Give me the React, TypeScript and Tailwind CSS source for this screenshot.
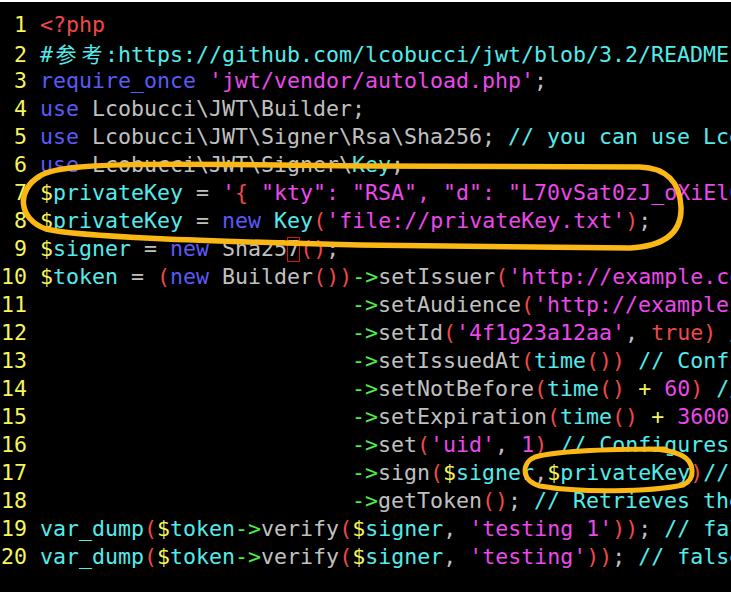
import React from "react";

type C = "y" | "r" | "c" | "b" | "g" | "m" | "n";
type Seg = [string, C];

const color: Record<C, string> = {
  y: "text-[#f5f55c]",
  r: "text-[#f04848]",
  c: "text-[#52ecec]",
  b: "text-[#5a5af8]",
  g: "text-[#c0c0c0]",
  m: "text-[#ec48ec]",
  n: "text-[#4cf04c]",
};

const IND = "                        ";

const lines: Seg[][] = [
  [["<?php", "r"]],
  [], // line 2 drawn separately (CJK)
  [["require_once", "b"], [" ", "g"], ["'jwt/vendor/autoload.php'", "m"], [";", "g"]],
  [["use", "b"], [" Lcobucci\\JWT\\Builder;", "g"]],
  [
    ["use", "b"],
    [" Lcobucci\\JWT\\Signer\\Rsa\\Sha256; ", "g"],
    ["// you can use Lcobucci\\JWT\\Signer\\Ecdsa\\Sha256 if you're using ECDSA keys", "c"],
  ],
  [["use", "b"], [" Lcobucci\\JWT\\Signer\\", "g"], ["Key", "c"], [";", "g"]],
  [
    ["$", "y"],
    ["privateKey", "c"],
    [" = ", "g"],
    ["'", "m"],
    ["{", "r"],
    [' "kty": "RSA", "d": "L70vSat0zJ_oXiEl6q8uCt1xC0", "n": "r1QM"', "m"],
  ],
  [
    ["$", "y"],
    ["privateKey", "c"],
    [" = ", "g"],
    ["new", "b"],
    [" ", "g"],
    ["Key", "c"],
    ["(", "r"],
    ["'file://privateKey.txt'", "m"],
    [")", "r"],
    [";", "g"],
  ],
  [], // line 9 drawn separately (cursor)
  [
    ["$", "y"],
    ["token", "c"],
    [" = ", "g"],
    ["(", "r"],
    ["new", "b"],
    [" Builder", "g"],
    ["())", "r"],
    ["->", "n"],
    ["setIssuer", "g"],
    ["(", "r"],
    ["'http://example.com'", "m"],
    [")", "r"],
    [" // Configures the issuer (iss claim)", "c"],
  ],
  [
    [IND, "g"],
    ["->", "n"],
    ["setAudience", "g"],
    ["(", "r"],
    ["'http://example.org'", "m"],
    [")", "r"],
    [" // Configures the audience (aud claim)", "c"],
  ],
  [
    [IND, "g"],
    ["->", "n"],
    ["setId", "g"],
    ["(", "r"],
    ["'4f1g23a12aa'", "m"],
    [", ", "g"],
    ["true", "r"],
    [")", "r"],
    [" // Configures the id (jti claim)", "c"],
  ],
  [
    [IND, "g"],
    ["->", "n"],
    ["setIssuedAt", "g"],
    ["(", "r"],
    ["time", "c"],
    ["())", "r"],
    [" // Configures the time that the token was issued", "c"],
  ],
  [
    [IND, "g"],
    ["->", "n"],
    ["setNotBefore", "g"],
    ["(", "r"],
    ["time", "c"],
    ["()", "r"],
    [" ", "g"],
    ["+", "y"],
    [" ", "g"],
    ["60", "m"],
    [")", "r"],
    [" // Configures the time before which the token cannot be accepted", "c"],
  ],
  [
    [IND, "g"],
    ["->", "n"],
    ["setExpiration", "g"],
    ["(", "r"],
    ["time", "c"],
    ["()", "r"],
    [" ", "g"],
    ["+", "y"],
    [" ", "g"],
    ["3600", "m"],
    [")", "r"],
    [" // Configures the expiration time", "c"],
  ],
  [
    [IND, "g"],
    ["->", "n"],
    ["set", "g"],
    ["(", "r"],
    ["'uid'", "m"],
    [", ", "g"],
    ["1", "m"],
    [")", "r"],
    [" // Configures a new claim, called \"uid\"", "c"],
  ],
  [
    [IND, "g"],
    ["->", "n"],
    ["sign", "g"],
    ["(", "r"],
    ["$", "y"],
    ["signer", "c"],
    [",", "g"],
    ["$", "y"],
    ["privateKey", "c"],
    [")", "r"],
    ["// creates a signature using your private key", "c"],
  ],
  [
    [IND, "g"],
    ["->", "n"],
    ["getToken", "g"],
    ["()", "r"],
    [";", "g"],
    [" // Retrieves the generated token", "c"],
  ],
  [
    ["var_dump", "c"],
    ["(", "r"],
    ["$", "y"],
    ["token", "c"],
    ["->", "n"],
    ["verify", "g"],
    ["(", "r"],
    ["$", "y"],
    ["signer", "c"],
    [", ", "g"],
    ["'testing 1'", "m"],
    ["))", "r"],
    [";", "g"],
    [" // false, because we use a different key", "c"],
  ],
  [
    ["var_dump", "c"],
    ["(", "r"],
    ["$", "y"],
    ["token", "c"],
    ["->", "n"],
    ["verify", "g"],
    ["(", "r"],
    ["$", "y"],
    ["signer", "c"],
    [", ", "g"],
    ["'testing'", "m"],
    ["))", "r"],
    [";", "g"],
    [" // false, because the data is different", "c"],
  ],
];

const Segs = ({ segs }: { segs: Seg[] }) => (
  <>
    {segs.map(([t, k], i) => (
      <span key={i} className={color[k]}>
        {t}
      </span>
    ))}
  </>
);

const Cjk = ({ ch }: { ch: string }) => (
  <span className="inline-block w-[26px] text-center font-['Noto_Sans_CJK_SC',sans-serif] text-[21px] text-[#52ecec]">
    {ch}
  </span>
);

const Line2 = () => (
  <>
    <span className="text-[#52ecec]">#</span>
    <Cjk ch="参" />
    <Cjk ch="考" />
    <span className="text-[#52ecec]">:https://github.com/lcobucci/jwt/blob/3.2/README.md</span>
  </>
);

const Line9 = () => (
  <>
    <Segs segs={[["$", "y"], ["signer", "c"], [" = ", "g"], ["new", "b"], [" Sha25", "g"]]} />
    <span className="relative text-[#c0c0c0]">
      7
      <span className="absolute left-0 top-[1px] h-[25px] w-[13px] border border-[#e01010]" />
    </span>
    <Segs segs={[["()", "r"], [";", "g"]]} />
  </>
);

export default function App() {
  return (
    <div className="relative h-[592px] w-[731px] overflow-hidden bg-black">
      <div className="h-[2px] bg-white" />
      <div className="pl-[1px] pt-[9px] font-['DejaVu_Sans_Mono',monospace] text-[21.6px] leading-[28px]">
        {lines.map((segs, i) => (
          <div key={i} className="h-[28px] whitespace-pre">
            <span className="text-[#f5f55c]">{String(i + 1).padStart(2, " ")}</span>
            <span> </span>
            {i === 1 ? <Line2 /> : i === 8 ? <Line9 /> : <Segs segs={segs} />}
          </div>
        ))}
      </div>
      <svg className="pointer-events-none absolute left-0 top-0" width="731" height="592" viewBox="0 0 731 592" fill="none">
        <path
          d="M40 176 C60 162 150 163 370 166 L640 167 C666 168 680 182 681 207 C682 232 666 246 630 248 L360 245 C200 241 80 237 46 229 C18 219 16 190 40 176 Z"
          stroke="#fbb713"
          strokeWidth="5.5"
          strokeLinejoin="round"
        />
        <path
          d="M665 449 C620 449 560 450 535 457 C521 463 521 481 540 486 C580 493 650 492 683 485 C696 479 695 462 681 455 C670 450 660 449 648 449"
          stroke="#fbb713"
          strokeWidth="5"
          strokeLinecap="round"
        />
      </svg>
    </div>
  );
}
